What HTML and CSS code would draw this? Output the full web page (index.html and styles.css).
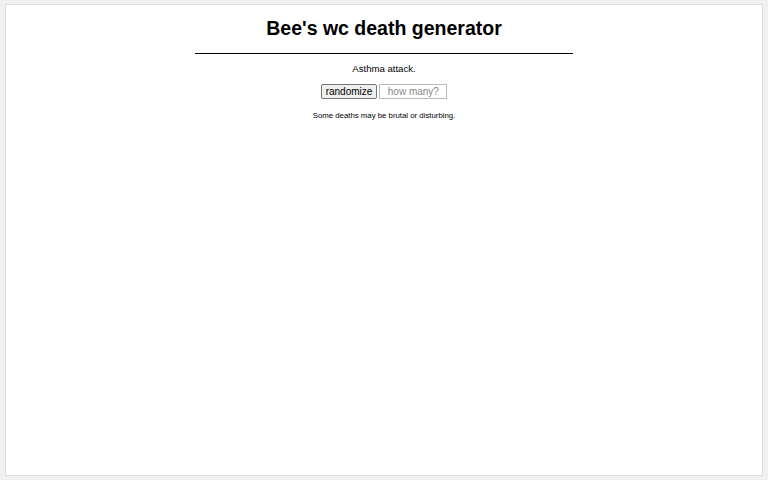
FILE: index.html
```html
<!DOCTYPE html>
<html lang="en">
<head>
<meta charset="utf-8">
<title>Bee's wc death generator</title>
<link rel="stylesheet" href="styles.css">
</head>
<body>
<main class="panel">
  <h1 class="title">Bee's wc death generator</h1>
  <hr class="rule">
  <p class="death">Asthma attack.</p>
  <div class="controls">
    <button class="btn" type="button">randomize</button>
    <input class="count" type="text" placeholder="how many?">
  </div>
  <p class="note">Some deaths may be brutal or disturbing.</p>
</main>
</body>
</html>
```
FILE: styles.css
```css
html, body {
  height: 100%;
}
body {
  margin: 0;
  padding: 4px 5px 4px 5px;
  box-sizing: border-box;
  background: #f1f1f1;
  font-family: "Liberation Sans", Arial, sans-serif;
  color: #000;
}
.panel {
  box-sizing: border-box;
  height: 100%;
  background: #fff;
  border: 1px solid #dcdcdc;
  display: flex;
  flex-direction: column;
  align-items: center;
  padding-top: 11px;
}
.title {
  margin: 0;
  font-size: 19.5px;
  font-weight: bold;
  line-height: 24px;
}
.rule {
  width: 50%;
  margin: 13px 0 0 0;
  border: 0;
  border-top: 1px solid #000;
  height: 0;
}
.death {
  margin: 8px 0 0 0;
  font-size: 9.6px;
  line-height: 13px;
}
.controls {
  margin-top: 9px;
  display: flex;
  gap: 2px;
}
.btn {
  font-family: "Liberation Sans", Arial, sans-serif;
  font-size: 10px;
  height: 15px;
  padding: 0 4px;
  background: #efefef;
  border: 1px solid #767676;
  border-radius: 2px;
  color: #000;
}
.count {
  box-sizing: border-box;
  font-family: "Liberation Sans", Arial, sans-serif;
  font-size: 10px;
  width: 68px;
  height: 15px;
  padding: 0 2px;
  border: 1px solid #bbb;
  text-align: center;
}
.count::placeholder {
  color: #888;
}
.note {
  margin: 12px 0 0 0;
  font-size: 7.8px;
  line-height: 10px;
}
```
